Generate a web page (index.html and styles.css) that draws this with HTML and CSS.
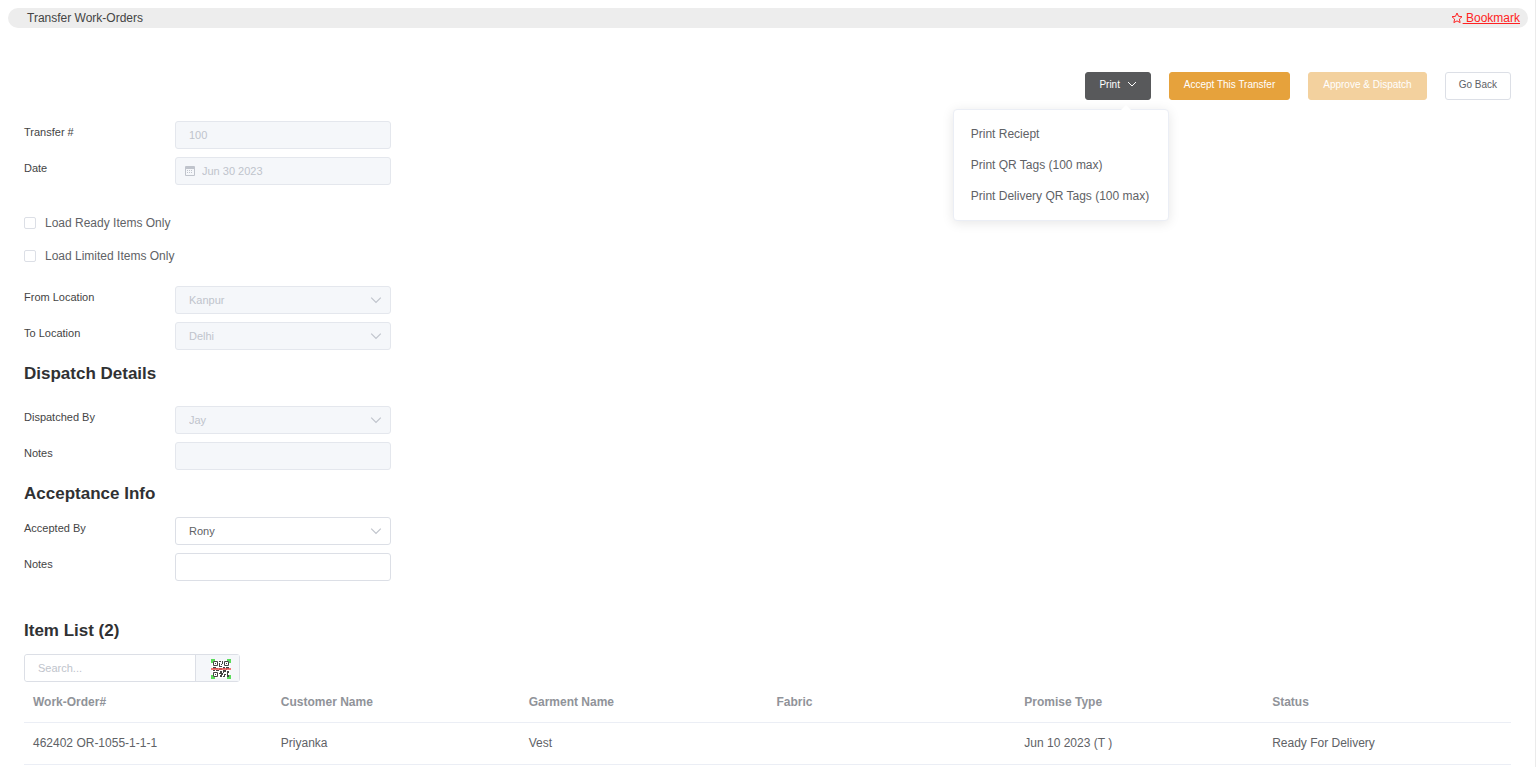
FILE: index.html
```
<!DOCTYPE html>
<html lang="en">
<head>
    <meta charset="UTF-8">
    <meta name="viewport" content="width=device-width, initial-scale=1.0">
    <title>Transfer Work-Orders</title>
    <link rel="stylesheet" href="styles.css">
</head>
<body>
    <div class="page">
        <header class="title-bar">
            <span>Transfer Work-Orders</span>
            <a class="bookmark" href="#"><svg class="star" viewBox="0 0 12 12"><path d="M6 1l1.5 3.3 3.5.4-2.6 2.4.7 3.5L6 8.9l-3.1 1.7.7-3.5L1 4.7l3.5-.4z"/></svg>&nbsp;Bookmark</a>
        </header>

        <main class="content">
            <div class="toolbar">
                <div class="dropdown">
                    <button class="btn btn-dark" id="printButton" type="button" aria-haspopup="true" aria-expanded="true">Print <svg class="chevron" viewBox="0 0 10 10"><path d="M1 3l4 4 4-4"/></svg></button>
                    <ul class="menu" id="printMenu">
                        <li><a href="#">Print Reciept</a></li>
                        <li><a href="#">Print QR Tags (100 max)</a></li>
                        <li><a href="#">Print Delivery QR Tags (100 max)</a></li>
                    </ul>
                </div>
                <button class="btn btn-warning" type="button">Accept This Transfer</button>
                <button class="btn btn-warning" type="button" disabled>Approve &amp; Dispatch</button>
                <button class="btn" type="button">Go Back</button>
            </div>

            <form>
                <div class="fields">
                    <div class="field">
                        <label for="transferNo">Transfer #</label>
                        <div class="control"><input type="text" id="transferNo" value="100" disabled></div>
                    </div>
                    <div class="field">
                        <label for="transferDate">Date</label>
                        <div class="control date">
                            <svg class="calendar" viewBox="0 0 12 12"><path d="M1.5 1.5h9v9h-9zM1.5 2.5h9M1.5 3.5h9"/><path class="dots" d="M3 5.5h6M3 7.5h6"/></svg>
                            <input type="text" id="transferDate" value="Jun 30 2023" disabled>
                        </div>
                    </div>
                </div>

                <div class="checks">
                    <label><input type="checkbox"> Load Ready Items Only</label>
                    <label><input type="checkbox"> Load Limited Items Only</label>
                </div>

                <div class="fields">
                    <div class="field">
                        <label for="fromLocation">From Location</label>
                        <div class="control">
                            <select id="fromLocation" disabled><option>Kanpur</option></select>
                            <svg class="chevron" viewBox="0 0 10 10"><path d="M1 3l4 4 4-4"/></svg>
                        </div>
                    </div>
                    <div class="field">
                        <label for="toLocation">To Location</label>
                        <div class="control">
                            <select id="toLocation" disabled><option>Delhi</option></select>
                            <svg class="chevron" viewBox="0 0 10 10"><path d="M1 3l4 4 4-4"/></svg>
                        </div>
                    </div>
                </div>

                <h3 class="dispatch-title">Dispatch Details</h3>
                <div class="fields">
                    <div class="field">
                        <label for="dispatchedBy">Dispatched By</label>
                        <div class="control">
                            <select id="dispatchedBy" disabled><option>Jay</option></select>
                            <svg class="chevron" viewBox="0 0 10 10"><path d="M1 3l4 4 4-4"/></svg>
                        </div>
                    </div>
                    <div class="field">
                        <label for="dispatchNotes">Notes</label>
                        <div class="control"><input type="text" id="dispatchNotes" disabled></div>
                    </div>
                </div>

                <h3>Acceptance Info</h3>
                <div class="fields">
                    <div class="field">
                        <label for="acceptedBy">Accepted By</label>
                        <div class="control">
                            <select id="acceptedBy"><option>Rony</option></select>
                            <svg class="chevron" viewBox="0 0 10 10"><path d="M1 3l4 4 4-4"/></svg>
                        </div>
                    </div>
                    <div class="field">
                        <label for="acceptNotes">Notes</label>
                        <div class="control"><input type="text" id="acceptNotes"></div>
                    </div>
                </div>
            </form>

            <section class="items">
                <h3>Item List (2)</h3>
                <div class="search-box">
                    <input type="text" placeholder="Search..." aria-label="Search items">
                    <button type="button" aria-label="Scan QR code">
                        <svg class="qr" viewBox="0 0 20 20">
                            <rect class="paper" x="1" y="1" width="18" height="18"/>
                            <path class="code" d="M2.5 2.5h4v4h-4zM13.5 2.5h4v4h-4zM2.5 13.5h4v4h-4z"/>
                            <path class="code-fill" d="M4 4h1v1H4zM15 4h1v1h-1zM4 15h1v1H4zM8 2h2v1H8zM11 2h1v3h-1zM8 4h1v3h2v1H8zM10 5h1v1h-1zM2 8h3v1h2v1H2zM8 9h3v2H8zM12 8h2v2h-2zM15 8h3v2h-2v1h-1zM2 11h2v1H2zM5 11h3v1H5zM9 12h2v2h1v2h-1v2H9v-2h1v-1H8v-1h1zM12 11h3v2h-2v1h-1zM16 12h2v2h-1v2h-1zM13 15h2v1h-1v2h-2v-1h1zM16 16h2v2h-2z"/>
                            <path class="scan" d="M0 10h20"/>
                            <path class="corner" d="M1 4V1h3M16 1h3v3M1 16v3h3M16 19h3v-3"/>
                        </svg>
                    </button>
                </div>
                <table>
                    <thead>
                        <tr>
                            <th>Work-Order#</th>
                            <th>Customer Name</th>
                            <th>Garment Name</th>
                            <th>Fabric</th>
                            <th>Promise Type</th>
                            <th>Status</th>
                        </tr>
                    </thead>
                    <tbody>
                        <tr>
                            <td>462402 OR-1055-1-1-1</td>
                            <td>Priyanka</td>
                            <td>Vest</td>
                            <td></td>
                            <td>Jun 10 2023 (T )</td>
                            <td>Ready For Delivery</td>
                        </tr>
                    </tbody>
                </table>
            </section>
        </main>
    </div>
    <script>
        const printButton = document.getElementById('printButton');
        const printMenu = document.getElementById('printMenu');

        printButton.addEventListener('click', () => {
            printMenu.hidden = !printMenu.hidden;
            printButton.setAttribute('aria-expanded', String(!printMenu.hidden));
        });
    </script>
</body>
</html>
```
FILE: styles.css
```
* {
    box-sizing: border-box;
}
body {
    margin: 0;
    font-family: "Liberation Sans", Arial, sans-serif;
    font-size: 12px;
    color: #606266;
    background: #fff;
}
input, select, button {
    font-family: inherit;
}
svg {
    fill: none;
    stroke: currentColor;
}

/* Layout */
.page {
    min-height: 100vh;
    padding: 8px 7px 0 8px;
    border-right: 1px solid #ebebeb;
}
.content {
    padding: 44px 17px 0 16px;
}

/* Title bar */
.title-bar {
    display: flex;
    justify-content: space-between;
    align-items: center;
    height: 20px;
    padding: 0 8px 0 19px;
    border-radius: 10px;
    background: #ededed;
    color: #444;
}
.bookmark {
    display: flex;
    align-items: center;
    color: #f22;
}
.star {
    width: 12px;
    height: 12px;
}

/* Buttons */
.toolbar {
    display: flex;
    justify-content: flex-end;
    gap: 18px;
    margin-bottom: 21px;
}
.btn {
    height: 28px;
    padding: 0 13px 3px;
    border: 1px solid #dcdfe6;
    border-radius: 3px;
    background: #fff;
    color: #606266;
    font-size: 10px;
    font-weight: 500;
    cursor: pointer;
}
.btn-dark {
    border-color: #58595b;
    background: #58595b;
    color: #fff;
}
.btn-warning {
    padding: 0 14px 3px;
    border-color: #e6a23c;
    background: #e6a23c;
    color: #fff;
}
.btn-warning:disabled {
    border-color: #f3d19e;
    background: #f3d19e;
    cursor: not-allowed;
}
.chevron {
    width: 12px;
    height: 12px;
}
.btn .chevron {
    width: 10px;
    height: 10px;
    margin-left: 4px;
    vertical-align: -1px;
}

/* Print menu */
.dropdown {
    position: relative;
}
.menu {
    position: absolute;
    top: 37px;
    right: -18px;
    z-index: 10;
    width: 216px;
    margin: 0;
    padding: 9px 0 8px;
    border: 1px solid #ebeef5;
    border-radius: 4px;
    background: #fff;
    box-shadow: 0 2px 12px rgba(0, 0, 0, 0.1);
    list-style: none;
}
.menu[hidden] {
    display: none;
}
.menu::before {
    content: "";
    position: absolute;
    top: -5px;
    right: 37px;
    border: 5px solid transparent;
    border-top: 0;
    border-bottom-color: #fff;
}
.menu a {
    display: block;
    padding: 0 17px;
    color: #606266;
    line-height: 31px;
    text-decoration: none;
    white-space: nowrap;
}
.menu a:hover {
    background: #f5f7fa;
}

/* Form */
.fields {
    display: grid;
    gap: 8px;
}
.field {
    display: grid;
    grid-template-columns: 151px 216px;
}
.field label {
    color: #444;
    font-size: 11px;
    line-height: 22px;
}
.control {
    position: relative;
}
.control input,
.control select {
    display: block;
    width: 100%;
    height: 28px;
    padding: 0 13px;
    border: 1px solid #dcdfe6;
    border-radius: 3px;
    background: #fff;
    color: #606266;
    font-size: 11px;
    appearance: none;
}
.control input:disabled,
.control select:disabled {
    border-color: #e4e7ed;
    background: #f5f7fa;
    color: #c0c4cc;
    opacity: 1;
}
.control .chevron {
    position: absolute;
    top: 8px;
    right: 9px;
    color: #c0c4cc;
    pointer-events: none;
}
.control.date input {
    padding-left: 26px;
}
.calendar {
    position: absolute;
    top: 8px;
    left: 9px;
    width: 12px;
    height: 12px;
    color: #c0c4cc;
}
.calendar .dots {
    stroke-dasharray: 1 1;
}
.checks {
    display: grid;
    gap: 13px;
    margin: 28px 0 20px;
}
.checks label {
    display: flex;
    align-items: center;
    gap: 9px;
    height: 20px;
}
.checks input {
    width: 12px;
    height: 12px;
    margin: 0;
    border: 1px solid #dcdfe6;
    border-radius: 2px;
    background: #fff;
    appearance: none;
}
.checks input:checked {
    background: #e6a23c;
}
h3 {
    margin: 14px 0 13px;
    color: #303133;
    font-size: 17px;
    line-height: 20px;
}
.dispatch-title {
    margin-bottom: 22px;
}

/* Item list */
.items {
    padding-top: 26px;
}
.search-box {
    display: flex;
    width: 216px;
    height: 28px;
    border: 1px solid #dcdfe6;
    border-radius: 3px;
}
.search-box input {
    flex: 1;
    min-width: 0;
    padding: 0 13px;
    border: 0;
    border-radius: 3px;
    font-size: 11px;
}
.search-box input::placeholder {
    color: #c0c4cc;
}
.search-box button {
    width: 44px;
    padding: 1px 0 0 7px;
    border: 0;
    border-left: 1px solid #dcdfe6;
    background: #f5f7fa;
    cursor: pointer;
}
.qr {
    display: block;
    width: 20px;
    height: 20px;
    margin: 0 auto;
}
.qr .paper {
    fill: #fff;
    stroke: none;
}
.qr .code {
    stroke: #444;
}
.qr .code-fill {
    fill: #444;
    stroke: none;
}
.qr .scan {
    stroke: #e55;
    stroke-width: 2;
    opacity: 0.8;
}
.qr .corner {
    stroke: #5bdc5b;
    stroke-width: 2;
}
table {
    width: 100%;
    table-layout: fixed;
    border-collapse: collapse;
}
th, td {
    height: 42px;
    padding: 0 9px;
    border-bottom: 1px solid #ebeef5;
    text-align: left;
}
th {
    height: 40px;
    color: #909399;
}
```
